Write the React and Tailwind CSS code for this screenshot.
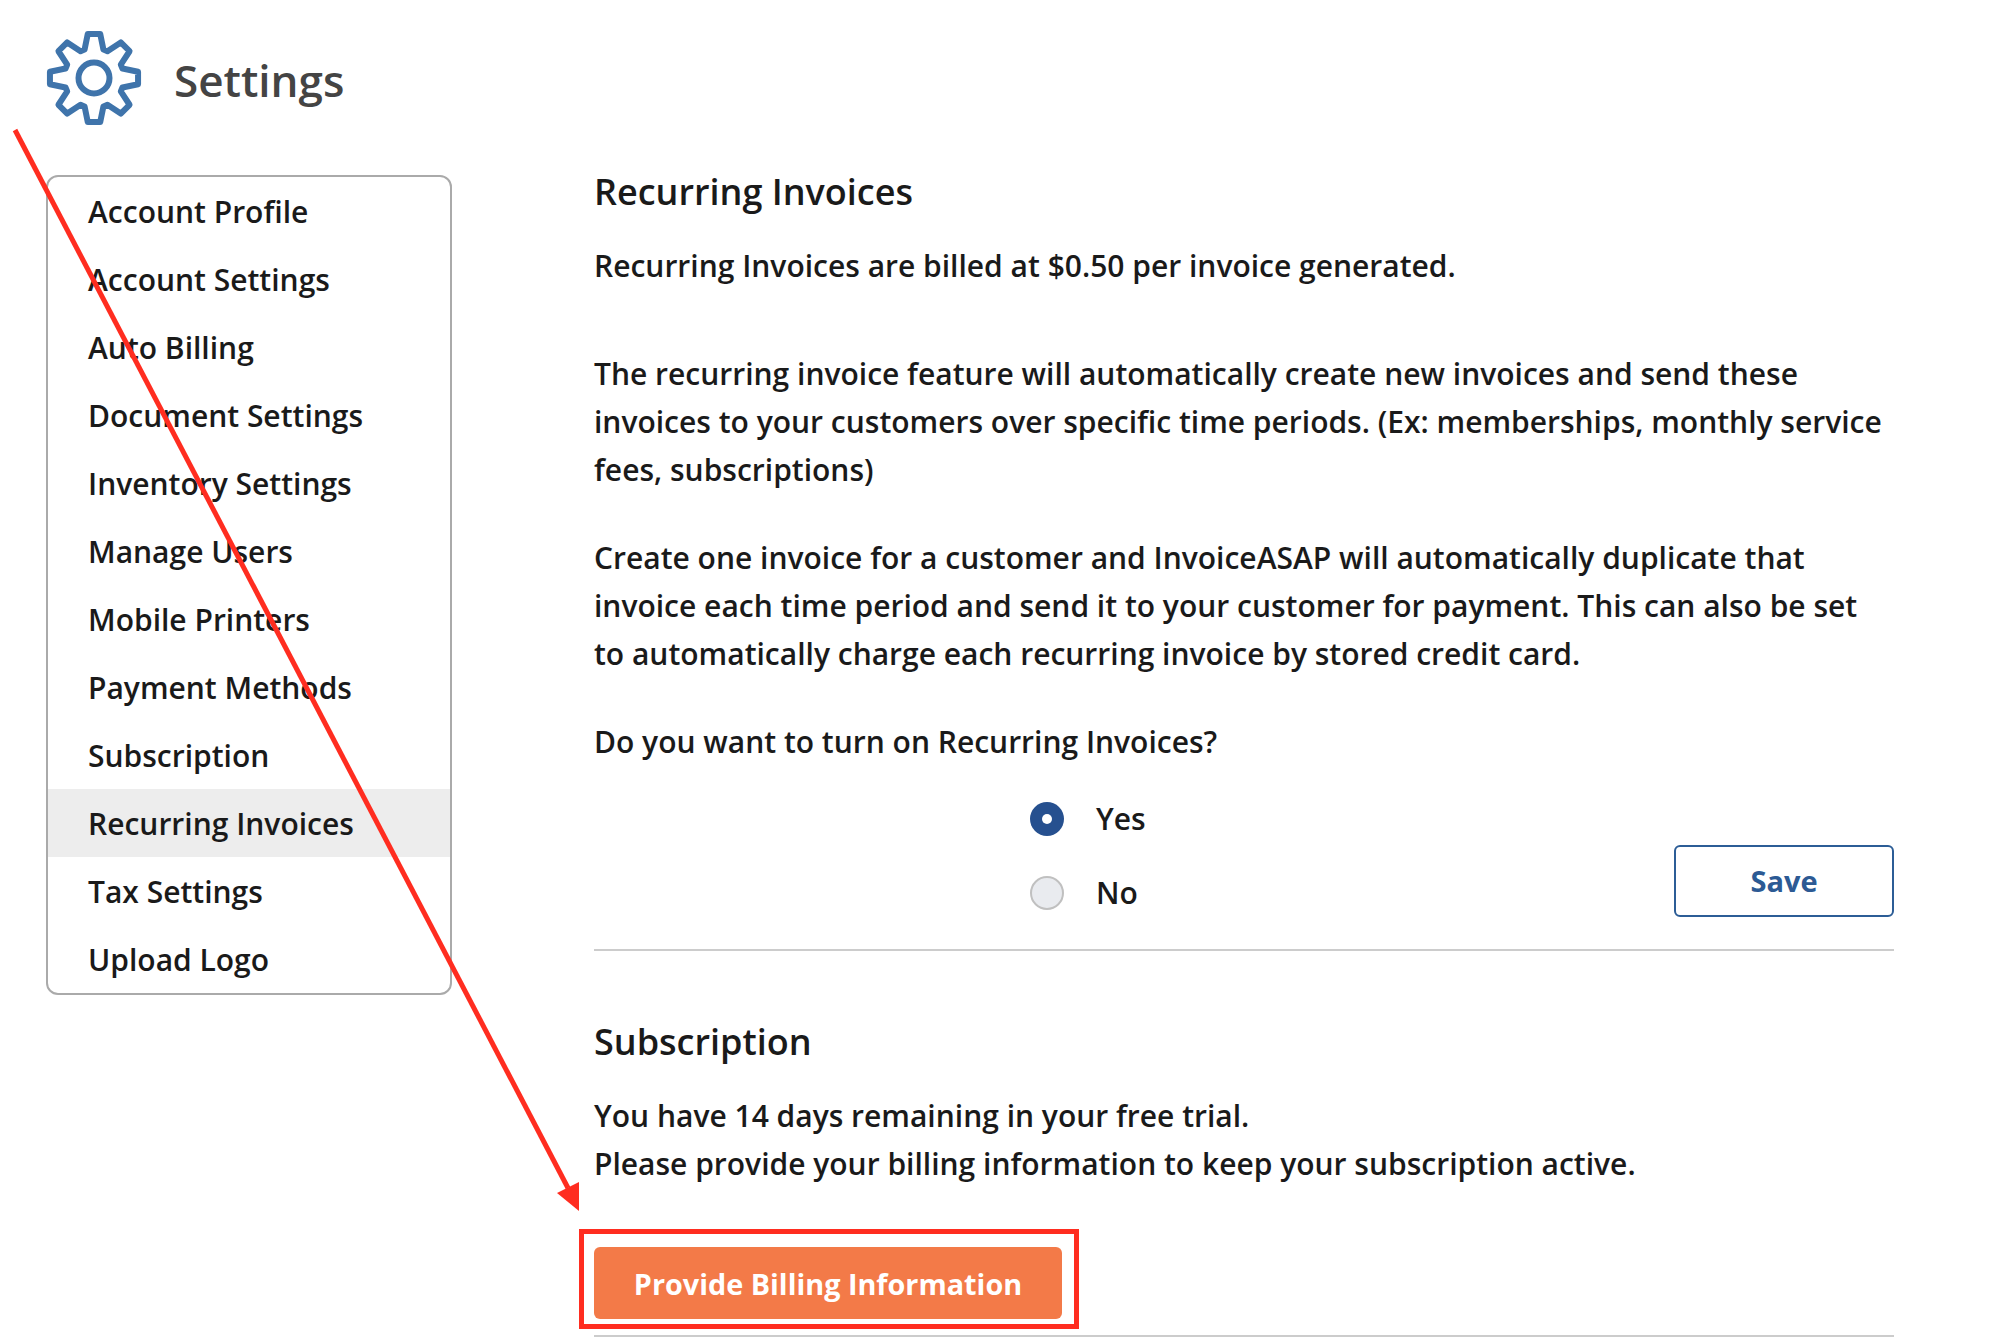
const menuItems = [
  'Account Profile',
  'Account Settings',
  'Auto Billing',
  'Document Settings',
  'Inventory Settings',
  'Manage Users',
  'Mobile Printers',
  'Payment Methods',
  'Subscription',
  'Recurring Invoices',
  'Tax Settings',
  'Upload Logo',
];

// eight toothed gear, built once from polar points
const gearPath = () => {
  const cx = 48;
  const cy = 48;
  const pt = (r, a) => `${(cx + r * Math.sin(a)).toFixed(2)} ${(cy - r * Math.cos(a)).toFixed(2)}`;
  const pts = [];
  for (let i = 0; i < 8; i++) {
    const a = (i * Math.PI) / 4;
    pts.push(pt(30, a - 0.32), pt(44.5, a - 0.14), pt(44.5, a + 0.14), pt(30, a + 0.32));
  }
  return `M${pts.join('L')}Z`;
};

const GearIcon = () => (
  <svg width="96" height="96" viewBox="0 0 96 96" fill="none" stroke="#3f74ab" strokeWidth="6" strokeLinejoin="round">
    <path d={gearPath()} />
    <circle cx="48" cy="48" r="15.5" />
  </svg>
);

const Annotation = () => (
  <svg className="absolute top-0 left-0 pointer-events-none" width="2001" height="1337" viewBox="0 0 2001 1337" fill="none">
    <line x1="15" y1="130" x2="568" y2="1188" stroke="#ff2d20" strokeWidth="5" />
    <polygon points="579,1211 557,1193 579,1182" fill="#ff2d20" />
    <rect x="581.5" y="1231.5" width="495" height="95" stroke="#ff2d20" strokeWidth="5" />
  </svg>
);

const Radio = ({ checked, label }) => (
  <div className="flex items-center h-12">
    {checked ? (
      <span className="flex items-center justify-center w-[34px] h-[34px] rounded-full bg-[#26508f]">
        <span className="w-[10px] h-[10px] rounded-full bg-white" />
      </span>
    ) : (
      <span className="w-[34px] h-[34px] rounded-full bg-[#e9ebef] border-2 border-[#c0c0c0]" />
    )}
    <span className="ml-8">{label}</span>
  </div>
);

export default function App() {
  return (
    <div className="relative flex w-[2001px] h-[1337px] overflow-hidden bg-white text-[30px] text-[#1a1a1a] font-['Open_Sans',sans-serif] font-semibold">
      <div className="w-[594px] shrink-0 pl-[46px] pt-[30px]">
        <div className="flex items-center h-[95px] gap-[32px]">
          <GearIcon />
          <h1 className="pt-[5px] text-[44px] text-[#444444]">Settings</h1>
        </div>
        <div className="w-[406px] mt-[50px] border-2 border-[#aaaaaa] rounded-xl overflow-hidden">
          {menuItems.map((item) => (
            <div
              key={item}
              className={`flex items-center h-[68px] pl-[40px] ${item === 'Recurring Invoices' ? 'bg-[#ededed]' : ''}`}
            >
              {item}
            </div>
          ))}
        </div>
      </div>

      <div className="w-[1300px] pt-[168px] leading-[48px]">
        <h2 className="text-[36px] leading-[48px]">Recurring Invoices</h2>
        <p className="mt-[26px]">Recurring Invoices are billed at $0.50 per invoice generated.</p>
        <p className="mt-[60px]">
          The recurring invoice feature will automatically create new invoices and send these<br />
          invoices to your customers over specific time periods. (Ex: memberships, monthly service<br />
          fees, subscriptions)
        </p>
        <p className="mt-[40px]">
          Create one invoice for a customer and InvoiceASAP will automatically duplicate that<br />
          invoice each time period and send it to your customer for payment. This can also be set<br />
          to automatically charge each recurring invoice by stored credit card.
        </p>
        <p className="mt-[40px]">Do you want to turn on Recurring Invoices?</p>

        <div className="flex items-end justify-between mt-[29px] pl-[436px] pb-[32px] border-b-2 border-[#cccccc]">
          <div className="flex flex-col gap-[26px]">
            <Radio checked label="Yes" />
            <Radio label="No" />
          </div>
          <button className="w-[220px] h-[72px] border-2 border-[#2c5d96] rounded-md text-[29px] font-bold text-[#2c5a94]">
            Save
          </button>
        </div>

        <h2 className="mt-[67px] text-[36px] leading-[48px]">Subscription</h2>
        <p className="mt-[26px]">
          You have 14 days remaining in your free trial.<br />
          Please provide your billing information to keep your subscription active.
        </p>
        <button className="block mt-[59px] w-[468px] h-[72px] pt-[2px] rounded-md bg-[#f37a48] text-[28.8px] font-bold text-white">
          Provide Billing Information
        </button>
        <div className="mt-[16px] border-b-2 border-[#cccccc]" />
      </div>

      <Annotation />
    </div>
  );
}
